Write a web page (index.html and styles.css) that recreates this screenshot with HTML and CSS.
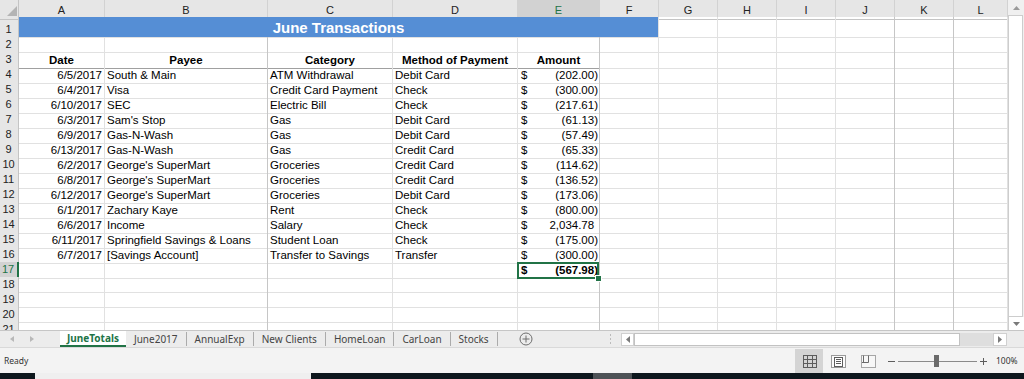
FILE: index.html
```html
<!DOCTYPE html>
<html lang="en">
<head>
<meta charset="utf-8">
<title>June Transactions</title>
<link rel="stylesheet" href="styles.css">
</head>
<body>
<div class="app">
  <div class="work">
    <div class="sheet">
      <div class="row hdr">
        <div class="corner"><svg width="19" height="17" viewBox="0 0 19 17"><polygon points="17,6 17,16 7,16" fill="#b4b4b4"/></svg></div>
        <div>A</div><div>B</div><div>C</div><div>D</div><div class="sel">E</div><div>F</div><div>G</div><div>H</div><div>I</div><div>J</div><div>K</div><div>L</div>
      </div>
      <div class="row r1">
        <div class="rh">1</div>
        <div class="c title">June Transactions</div>
        <div class="c"></div><div class="c"></div><div class="c"></div><div class="c"></div><div class="c"></div><div class="c"></div>
      </div>
      <div class="row">
        <div class="rh">2</div>
        <div class="c"></div><div class="c"></div><div class="c"></div><div class="c"></div><div class="c"></div><div class="c"></div><div class="c"></div><div class="c"></div><div class="c"></div><div class="c"></div><div class="c"></div><div class="c"></div>
      </div>
      <div class="row">
        <div class="rh">3</div>
        <div class="c th">Date</div><div class="c th">Payee</div><div class="c th">Category</div><div class="c th">Method of Payment</div><div class="c th">Amount</div>
        <div class="c"></div><div class="c"></div><div class="c"></div><div class="c"></div><div class="c"></div><div class="c"></div><div class="c"></div>
      </div>
      <div class="row">
        <div class="rh">4</div>
        <div class="c r">6/5/2017</div><div class="c">South &amp; Main</div><div class="c">ATM Withdrawal</div><div class="c">Debit Card</div>
        <div class="c amt"><span>$</span><span>(202.00)</span></div>
        <div class="c"></div><div class="c"></div><div class="c"></div><div class="c"></div><div class="c"></div><div class="c"></div><div class="c"></div>
      </div>
      <div class="row">
        <div class="rh">5</div>
        <div class="c r">6/4/2017</div><div class="c">Visa</div><div class="c">Credit Card Payment</div><div class="c">Check</div>
        <div class="c amt"><span>$</span><span>(300.00)</span></div>
        <div class="c"></div><div class="c"></div><div class="c"></div><div class="c"></div><div class="c"></div><div class="c"></div><div class="c"></div>
      </div>
      <div class="row">
        <div class="rh">6</div>
        <div class="c r">6/10/2017</div><div class="c">SEC</div><div class="c">Electric Bill</div><div class="c">Check</div>
        <div class="c amt"><span>$</span><span>(217.61)</span></div>
        <div class="c"></div><div class="c"></div><div class="c"></div><div class="c"></div><div class="c"></div><div class="c"></div><div class="c"></div>
      </div>
      <div class="row">
        <div class="rh">7</div>
        <div class="c r">6/3/2017</div><div class="c">Sam's Stop</div><div class="c">Gas</div><div class="c">Debit Card</div>
        <div class="c amt"><span>$</span><span>(61.13)</span></div>
        <div class="c"></div><div class="c"></div><div class="c"></div><div class="c"></div><div class="c"></div><div class="c"></div><div class="c"></div>
      </div>
      <div class="row">
        <div class="rh">8</div>
        <div class="c r">6/9/2017</div><div class="c">Gas-N-Wash</div><div class="c">Gas</div><div class="c">Debit Card</div>
        <div class="c amt"><span>$</span><span>(57.49)</span></div>
        <div class="c"></div><div class="c"></div><div class="c"></div><div class="c"></div><div class="c"></div><div class="c"></div><div class="c"></div>
      </div>
      <div class="row">
        <div class="rh">9</div>
        <div class="c r">6/13/2017</div><div class="c">Gas-N-Wash</div><div class="c">Gas</div><div class="c">Credit Card</div>
        <div class="c amt"><span>$</span><span>(65.33)</span></div>
        <div class="c"></div><div class="c"></div><div class="c"></div><div class="c"></div><div class="c"></div><div class="c"></div><div class="c"></div>
      </div>
      <div class="row">
        <div class="rh">10</div>
        <div class="c r">6/2/2017</div><div class="c">George's SuperMart</div><div class="c">Groceries</div><div class="c">Credit Card</div>
        <div class="c amt"><span>$</span><span>(114.62)</span></div>
        <div class="c"></div><div class="c"></div><div class="c"></div><div class="c"></div><div class="c"></div><div class="c"></div><div class="c"></div>
      </div>
      <div class="row">
        <div class="rh">11</div>
        <div class="c r">6/8/2017</div><div class="c">George's SuperMart</div><div class="c">Groceries</div><div class="c">Credit Card</div>
        <div class="c amt"><span>$</span><span>(136.52)</span></div>
        <div class="c"></div><div class="c"></div><div class="c"></div><div class="c"></div><div class="c"></div><div class="c"></div><div class="c"></div>
      </div>
      <div class="row">
        <div class="rh">12</div>
        <div class="c r">6/12/2017</div><div class="c">George's SuperMart</div><div class="c">Groceries</div><div class="c">Debit Card</div>
        <div class="c amt"><span>$</span><span>(173.06)</span></div>
        <div class="c"></div><div class="c"></div><div class="c"></div><div class="c"></div><div class="c"></div><div class="c"></div><div class="c"></div>
      </div>
      <div class="row">
        <div class="rh">13</div>
        <div class="c r">6/1/2017</div><div class="c">Zachary Kaye</div><div class="c">Rent</div><div class="c">Check</div>
        <div class="c amt"><span>$</span><span>(800.00)</span></div>
        <div class="c"></div><div class="c"></div><div class="c"></div><div class="c"></div><div class="c"></div><div class="c"></div><div class="c"></div>
      </div>
      <div class="row">
        <div class="rh">14</div>
        <div class="c r">6/6/2017</div><div class="c">Income</div><div class="c">Salary</div><div class="c">Check</div>
        <div class="c amt"><span>$</span><span>2,034.78<i class="pad">)</i></span></div>
        <div class="c"></div><div class="c"></div><div class="c"></div><div class="c"></div><div class="c"></div><div class="c"></div><div class="c"></div>
      </div>
      <div class="row">
        <div class="rh">15</div>
        <div class="c r">6/11/2017</div><div class="c">Springfield Savings &amp; Loans</div><div class="c">Student Loan</div><div class="c">Check</div>
        <div class="c amt"><span>$</span><span>(175.00)</span></div>
        <div class="c"></div><div class="c"></div><div class="c"></div><div class="c"></div><div class="c"></div><div class="c"></div><div class="c"></div>
      </div>
      <div class="row">
        <div class="rh">16</div>
        <div class="c r">6/7/2017</div><div class="c">[Savings Account]</div><div class="c">Transfer to Savings</div><div class="c">Transfer</div>
        <div class="c amt"><span>$</span><span>(300.00)</span></div>
        <div class="c"></div><div class="c"></div><div class="c"></div><div class="c"></div><div class="c"></div><div class="c"></div><div class="c"></div>
      </div>
      <div class="row">
        <div class="rh sel">17</div>
        <div class="c"></div><div class="c"></div><div class="c"></div><div class="c"></div>
        <div class="c amt tot"><b>$</b><b>(567.98)</b></div>
        <div class="c"></div><div class="c"></div><div class="c"></div><div class="c"></div><div class="c"></div><div class="c"></div><div class="c"></div>
      </div>
      <div class="row">
        <div class="rh">18</div>
        <div class="c"></div><div class="c"></div><div class="c"></div><div class="c"></div><div class="c"></div><div class="c"></div><div class="c"></div><div class="c"></div><div class="c"></div><div class="c"></div><div class="c"></div><div class="c"></div>
      </div>
      <div class="row">
        <div class="rh">19</div>
        <div class="c"></div><div class="c"></div><div class="c"></div><div class="c"></div><div class="c"></div><div class="c"></div><div class="c"></div><div class="c"></div><div class="c"></div><div class="c"></div><div class="c"></div><div class="c"></div>
      </div>
      <div class="row">
        <div class="rh">20</div>
        <div class="c"></div><div class="c"></div><div class="c"></div><div class="c"></div><div class="c"></div><div class="c"></div><div class="c"></div><div class="c"></div><div class="c"></div><div class="c"></div><div class="c"></div><div class="c"></div>
      </div>
      <div class="row">
        <div class="rh">21</div>
        <div class="c"></div><div class="c"></div><div class="c"></div><div class="c"></div><div class="c"></div><div class="c"></div><div class="c"></div><div class="c"></div><div class="c"></div><div class="c"></div><div class="c"></div><div class="c"></div>
      </div>
    </div>
    <div class="vscroll">
      <div class="vup"><svg width="7" height="4" viewBox="0 0 7 4"><polygon points="0,4 7,4 3.5,0" fill="#9a9a9a"/></svg></div>
      <div class="vthumb"></div>
      <div class="vdown"><svg width="7" height="4" viewBox="0 0 7 4"><polygon points="0,0 7,0 3.5,4" fill="#7a7a7a"/></svg></div>
    </div>
  </div>

  <div class="tabbar">
    <div class="tabzone">
      <div class="nav">
        <svg width="4" height="6" viewBox="0 0 4 6"><polygon points="4,0 4,6 0,3" fill="#b8b8b8"/></svg>
        <svg width="4" height="6" viewBox="0 0 4 6"><polygon points="0,0 0,6 4,3" fill="#b8b8b8"/></svg>
      </div>
      <div class="tabs">
        <div class="tab active">JuneTotals</div>
        <div class="tab">June2017</div>
        <div class="tab">AnnualExp</div>
        <div class="tab">New Clients</div>
        <div class="tab">HomeLoan</div>
        <div class="tab">CarLoan</div>
        <div class="tab">Stocks</div>
      </div>
      <div class="add"><svg width="14" height="14" viewBox="0 0 14 14"><circle cx="7" cy="7" r="6" fill="none" stroke="#6e6e6e" stroke-width="1"/><path d="M7 3.5V10.5M3.5 7H10.5" stroke="#6e6e6e" stroke-width="1"/></svg></div>
    </div>
    <div class="split"><svg width="2" height="10" viewBox="0 0 2 10"><rect x="0" y="0" width="1" height="2" fill="#bbb"/><rect x="0" y="4" width="1" height="2" fill="#bbb"/><rect x="0" y="8" width="1" height="2" fill="#bbb"/></svg></div>
    <div class="hscroll">
      <div class="hbtn"><svg width="4" height="7" viewBox="0 0 4 7"><polygon points="4,0 4,7 0,3.5" fill="#7a7a7a"/></svg></div>
      <div class="hthumb"></div>
      <div class="htrack"></div>
      <div class="hbtn"><svg width="4" height="7" viewBox="0 0 4 7"><polygon points="0,0 0,7 4,3.5" fill="#7a7a7a"/></svg></div>
    </div>
  </div>

  <div class="status">
    <span class="ready">Ready</span>
    <div class="views">
      <div class="vbtn on">
        <svg width="14" height="13" viewBox="0 0 14 13"><rect x="0.5" y="0.5" width="13" height="12" fill="none" stroke="#5c5c5c"/><path d="M4.5 0.5V12.5M9.5 0.5V12.5M0.5 4.5H13.5M0.5 8.5H13.5" stroke="#5c5c5c"/></svg>
      </div>
      <div class="vbtn">
        <svg width="15" height="13" viewBox="0 0 15 13"><rect x="0.5" y="0.5" width="14" height="12" fill="#fbfbfb" stroke="#9a9a9a"/><rect x="3.5" y="2.5" width="8" height="9" fill="#fff" stroke="#5c5c5c"/><path d="M5 4.5H10M5 6.5H10M5 8.5H10" stroke="#5c5c5c"/></svg>
      </div>
      <div class="vbtn">
        <svg width="15" height="13" viewBox="0 0 15 13"><rect x="0.5" y="0.5" width="14" height="12" fill="#f7f7f7" stroke="#a6a6a6"/><path d="M7.5 0.5V7.5M1 7.5H7.5M2.5 0.5V7.5" stroke="#6a6a6a"/></svg>
      </div>
    </div>
    <div class="zoom">
      <svg width="7" height="3" viewBox="0 0 7 3"><rect x="0" y="1" width="7" height="1" fill="#5c5c5c"/></svg>
      <div class="slider"><div class="knob"></div></div>
      <svg width="7" height="7" viewBox="0 0 7 7"><path d="M3.5 0V7M0 3.5H7" stroke="#5c5c5c"/></svg>
    </div>
    <span class="pct">100%</span>
  </div>

  <div class="taskbar">
    <div class="tb1"></div>
    <div class="tb2"></div>
    <div class="tb3"></div>
    <div class="tb4"></div>
    <div class="tb5"></div>
  </div>
</div>
</body>
</html>
```

FILE: styles.css
```css
* { box-sizing: border-box; }
html, body { margin: 0; padding: 0; }
body {
  width: 1024px;
  height: 379px;
  overflow: hidden;
  background: #fff;
  font-family: "Liberation Sans", Arial, sans-serif;
  color: #000;
}
.app { display: flex; flex-direction: column; height: 379px; }

/* ---------- worksheet ---------- */
.work { display: flex; height: 330px; overflow: hidden; }
.sheet { width: 1008px; height: 330px; overflow: hidden; }
.row {
  display: grid;
  grid-template-columns: 19px 86px 163px 125px 125px 82px 59px 59px 59px 59px 59px 59px 54px;
  height: 15px;
}
.row > div {
  border-right: 1px solid #e1e1e1;
  border-bottom: 1px solid #e1e1e1;
  white-space: nowrap;
  font-size: 11.5px;
  line-height: 16px;
}
.row:not(.hdr) > :nth-child(3),
.row:not(.hdr) > :nth-child(6),
.row:not(.hdr) > :nth-child(11),
.row:not(.hdr) > :nth-child(12) { border-right-color: #c6c6c6; }
.row.r1 > :nth-child(3) { border-right-color: #e1e1e1; }
.row.r1 > :nth-child(6),
.row.r1 > :nth-child(7) { border-right-color: #c6c6c6; }

/* column headers */
.hdr { height: 17px; background: #e6e6e6; }
.hdr > div {
  border-right-color: #d2d2d2;
  border-bottom-color: #c4c4c4;
  text-align: center;
  font-size: 11px;
  line-height: 16px;
  padding-top: 2px;
  color: #222;
}
.hdr > .corner { padding: 0; border-right-color: #c4c4c4; position: relative; }
.corner svg { position: absolute; left: 0; top: 0; }
.hdr > .sel {
  background: #d2d2d2;
  color: #217346;
  border-bottom: 2px solid #217346;
}

/* row headers */
.row > .rh {
  background: #e6e6e6;
  border-right-color: #c4c4c4;
  border-bottom-color: #d4d4d4;
  text-align: center;
  font-size: 11px;
  line-height: 15px;
  padding-right: 1px;
  color: #222;
}
.row > .rh.sel {
  background: #d2d2d2;
  color: #217346;
  border-right: 2px solid #217346;
}

/* cells */
.c { padding: 0 2px; }
.c.r { text-align: right; }
.c.th { font-weight: bold; text-align: center; border-bottom-color: #a0a0a0; }
.row.r1 { height: 20px; }
.r1 > .rh { padding-top: 5px; }
.row > .title {
  grid-column: span 6;
  background: #558ed5;
  color: #fff;
  font-weight: bold;
  font-size: 15px;
  line-height: 19px;
  padding-top: 1px;
  text-align: center;
  border-right-color: #e1e1e1;
}
.c.amt {
  display: flex;
  justify-content: space-between;
  padding: 0 1px 0 3px;
}
.amt .pad { visibility: hidden; font-style: normal; }
.c.tot { position: relative; }
.c.tot::before {
  content: "";
  position: absolute;
  left: -1px; top: 0; right: 0; bottom: -1px;
  border: 2px solid #217346;
}
.c.tot::after {
  content: "";
  position: absolute;
  right: -3px; bottom: -4px;
  width: 5px; height: 5px;
  background: #217346;
  border: 1px solid #fff;
}

/* vertical scrollbar */
.vscroll {
  width: 16px;
  height: 330px;
  display: flex;
  flex-direction: column;
  background: #f0f0f0;
}
.vup {
  height: 15px;
  display: flex;
  align-items: center;
  justify-content: center;
  padding-left: 1px;
}
.vthumb {
  flex: 1;
  background: #fff;
  border: 1px solid #cdcdcd;
  margin: 0 1px 0 0;
}
.vdown {
  height: 13px;
  background: #fff;
  border-left: 1px solid #cdcdcd;
  display: flex;
  align-items: center;
  justify-content: center;
}

/* ---------- sheet tabs ---------- */
.tabbar {
  height: 17px;
  display: flex;
  background: #ececec;
  border-top: 1px solid #c6c6c6;
  font-family: "Noto Sans", "Open Sans", sans-serif;
}
.tabzone { width: 605px; display: flex; align-items: stretch; }
.nav {
  width: 60px;
  display: flex;
  align-items: center;
  gap: 16px;
  padding-left: 10px;
}
.tabs { display: flex; }
.tab {
  font-size: 10px;
  line-height: 15px;
  color: #444;
  padding: 0 8px;
  border-right: 1px solid #ababab;
  margin: 1px 0 0;
  height: 14px;
}
.tab.active {
  background: #fff;
  color: #217346;
  font-weight: bold;
  padding: 0 7px;
  margin: 0;
  height: 16px;
  border-right: none;
  border-bottom: 2px solid #217346;
}
.add {
  margin-left: 21px;
  display: flex;
  align-items: center;
}
.split {
  width: 15px;
  display: flex;
  align-items: center;
  justify-content: center;
  padding-right: 3px;
}
.hscroll {
  width: 387px;
  height: 13px;
  margin-top: 2px;
  display: flex;
}
.hbtn {
  width: 14px;
  background: #fff;
  border: 1px solid #d0d0d0;
  display: flex;
  align-items: center;
  justify-content: center;
}
.hscroll .hbtn:first-child { margin-left: 1px; width: 13px; }
.hthumb {
  width: 326px;
  background: #fff;
  border: 1px solid #c2c2c2;
}
.htrack { flex: 1; background: #dedede; }

/* ---------- status bar ---------- */
.status {
  height: 26px;
  display: flex;
  align-items: stretch;
  background: #f3f3f3;
  border-top: 1px solid #d9d9d9;
  padding-top: 1px;
  font-family: "Noto Sans", "Open Sans", sans-serif;
  color: #333;
}
.ready {
  font-size: 8.5px;
  line-height: 24px;
  padding-left: 4px;
  width: 795px;
}
.views { display: flex; }
.vbtn {
  width: 29px;
  display: flex;
  align-items: center;
  justify-content: center;
}
.vbtn.on { width: 28px; background: #d4d4d4; padding-left: 1px; }
.vbtn + .vbtn { width: 30px; }
.zoom {
  display: flex;
  align-items: center;
  padding-left: 5px;
  gap: 3px;
}
.slider {
  width: 79px;
  height: 1px;
  background: #8a8a8a;
  position: relative;
}
.knob {
  position: absolute;
  left: 36px;
  top: -6px;
  width: 5px;
  height: 12px;
  background: #6a6a6a;
}
.pct {
  font-size: 8.5px;
  line-height: 24px;
  padding-left: 9px;
}

/* ---------- taskbar strip ---------- */
.taskbar { height: 6px; display: flex; background: #0d171d; }
.tb1 { width: 35px; }
.tb2 { width: 276px; background: #efefef; }
.tb3 { width: 282px; }
.tb4 { width: 39px; background: #4d5256; }
.tb5 { flex: 1; }
```
